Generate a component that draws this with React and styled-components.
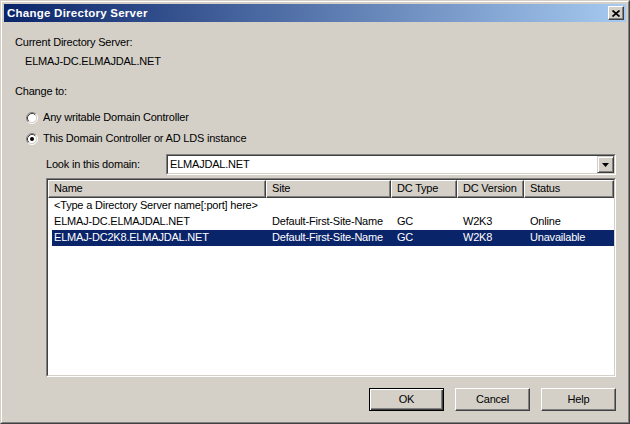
import React from 'react';
import styled, { createGlobalStyle } from 'styled-components';

const Global = createGlobalStyle`
  html, body { margin: 0; padding: 0; background: #d4d0c8; }
  body { width: 630px; height: 424px; overflow: hidden; }
  * { box-sizing: border-box; }
`;

const Window = styled.div`
  width: 630px;
  height: 424px;
  background: #d4d0c8;
  border: 1px solid;
  border-color: #d4d0c8 #404040 #404040 #d4d0c8;
  font-family: "Liberation Sans", Arial, sans-serif;
  font-size: 11px;
  letter-spacing: -0.2px;
  color: #000;
  display: flex;
  flex-direction: column;
`;

const Frame = styled.div`
  flex: 1;
  display: flex;
  flex-direction: column;
  border: 1px solid;
  border-color: #fff #808080 #808080 #fff;
  padding: 2px;
`;

const TitleBar = styled.div`
  height: 18px;
  display: flex;
  align-items: center;
  justify-content: space-between;
  padding: 0 2px 0 3px;
  background: linear-gradient(to right, #0a246a, #a6caf0);
`;

const Title = styled.span`
  color: #fff;
  font-weight: bold;
  font-size: 11.5px;
  letter-spacing: 0.25px;
  line-height: 13px;
`;

const CloseButton = styled.div`
  width: 16px;
  height: 14px;
  background: #d4d0c8;
  border: 1px solid;
  border-color: #fff #404040 #404040 #fff;
  box-shadow: inset -1px -1px #808080;
  display: flex;
  align-items: center;
  justify-content: center;
`;

const Body = styled.div`
  flex: 1;
  display: flex;
  flex-direction: column;
  padding: 14px 10px 0 11px;
`;

const Text = styled.div`
  line-height: 13px;
  height: 13px;
  margin-top: ${p => p.$mt || 0}px;
  padding-left: ${p => p.$indent || 0}px;
  white-space: nowrap;
`;

const RadioRow = styled.div`
  display: flex;
  align-items: center;
  gap: 5px;
  height: 13px;
  margin-left: 11px;
  margin-top: ${p => p.$mt}px;
  line-height: 13px;
`;

const DomainRow = styled.div`
  display: flex;
  align-items: center;
  margin-left: 31px;
  margin-top: 9px;
  height: 21px;
`;

const DomainLabel = styled.div`
  width: 120px;
  line-height: 13px;
`;

const Combo = styled.div`
  flex: 1;
  height: 21px;
  display: flex;
  border: 1px solid;
  border-color: #808080 #fff #fff #808080;
`;

const ComboInner = styled.div`
  flex: 1;
  display: flex;
  align-items: center;
  background: #fff;
  border: 1px solid;
  border-color: #404040 #d4d0c8 #d4d0c8 #404040;
`;

const ComboText = styled.div`
  flex: 1;
  padding-left: 2px;
  line-height: 13px;
`;

const DropButton = styled.div`
  width: 17px;
  height: 17px;
  background: #d4d0c8;
  border: 1px solid;
  border-color: #d4d0c8 #404040 #404040 #d4d0c8;
  box-shadow: inset 1px 1px #fff, inset -1px -1px #808080;
  display: flex;
  align-items: center;
  justify-content: center;
`;

const ListOuter = styled.div`
  margin-left: 31px;
  margin-top: 3px;
  height: 199px;
  display: flex;
  border: 1px solid;
  border-color: #808080 #fff #fff #808080;
`;

const ListInner = styled.div`
  flex: 1;
  background: #fff;
  border: 1px solid;
  border-color: #404040 #d4d0c8 #d4d0c8 #404040;
  display: flex;
  flex-direction: column;
`;

const Header = styled.div`
  display: grid;
  grid-template-columns: 218px 125px 66px 67px 1fr;
  height: 18px;
`;

const HeaderCell = styled.div`
  background: #d4d0c8;
  border: 1px solid;
  border-color: #fff #404040 #404040 #fff;
  box-shadow: inset -1px -1px #808080;
  padding-left: 5px;
  line-height: 15px;
  white-space: nowrap;
  overflow: hidden;
`;

const Row = styled.div`
  display: grid;
  grid-template-columns: 214px 125px 66px 67px 1fr;
  margin-left: 4px;
  height: 16px;
  line-height: 15px;
  background: ${p => (p.$selected ? '#0a246a' : 'transparent')};
  color: ${p => (p.$selected ? '#fff' : '#000')};
`;

const Cell = styled.div`
  padding-left: ${p => (p.$first ? 2 : 6)}px;
  white-space: nowrap;
  overflow: ${p => (p.$span ? 'visible' : 'hidden')};
  grid-column: ${p => (p.$span ? '1 / -1' : 'auto')};
`;

const Buttons = styled.div`
  display: flex;
  justify-content: flex-end;
  gap: 11px;
  margin-top: 11px;
`;

const Button = styled.div`
  width: 75px;
  height: 23px;
  display: flex;
  align-items: center;
  justify-content: center;
  background: #d4d0c8;
  border: 1px solid;
  border-color: ${p => (p.$default ? '#000' : '#fff #404040 #404040 #fff')};
  box-shadow: ${p =>
    p.$default
      ? 'inset 1px 1px #fff, inset -1px -1px #404040, inset -2px -2px #808080'
      : 'inset -1px -1px #808080'};
  line-height: 13px;
`;

const Radio = ({ checked }) => (
  <svg width="12" height="12" viewBox="0 0 12 12">
    <circle cx="6" cy="6" r="4.5" fill="#fff" />
    <path d="M2.11 9.89 A5.5 5.5 0 0 1 9.89 2.11" fill="none" stroke="#808080" />
    <path d="M2.82 9.18 A4.5 4.5 0 0 1 9.18 2.82" fill="none" stroke="#404040" />
    <path d="M9.89 2.11 A5.5 5.5 0 0 1 2.11 9.89" fill="none" stroke="#fff" />
    <path d="M9.18 2.82 A4.5 4.5 0 0 1 2.82 9.18" fill="none" stroke="#d4d0c8" />
    {checked && <circle cx="6" cy="6" r="2" fill="#000" />}
  </svg>
);

const rows = [
  { name: 'ELMAJ-DC.ELMAJDAL.NET', site: 'Default-First-Site-Name', type: 'GC', ver: 'W2K3', status: 'Online' },
  { name: 'ELMAJ-DC2K8.ELMAJDAL.NET', site: 'Default-First-Site-Name', type: 'GC', ver: 'W2K8', status: 'Unavailable', selected: true },
];

export default function App() {
  return (
    <>
      <Global />
      <Window>
        <Frame>
          <TitleBar>
            <Title>Change Directory Server</Title>
            <CloseButton>
              <svg width="8" height="7" viewBox="0 0 8 7">
                <path d="M0.5 0.5 L7.5 6.5 M7.5 0.5 L0.5 6.5" stroke="#000" strokeWidth="1.7" />
              </svg>
            </CloseButton>
          </TitleBar>
          <Body>
            <Text>Current Directory Server:</Text>
            <Text $mt={6} $indent={10}>ELMAJ-DC.ELMAJDAL.NET</Text>
            <Text $mt={17}>Change to:</Text>
            <RadioRow $mt={13}>
              <Radio />
              <span>Any writable Domain Controller</span>
            </RadioRow>
            <RadioRow $mt={8}>
              <Radio checked />
              <span>This Domain Controller or AD LDS instance</span>
            </RadioRow>
            <DomainRow>
              <DomainLabel>Look in this domain:</DomainLabel>
              <Combo>
                <ComboInner>
                  <ComboText>ELMAJDAL.NET</ComboText>
                  <DropButton>
                    <svg width="7" height="4" viewBox="0 0 7 4">
                      <path d="M0 0 H7 L3.5 4 Z" fill="#000" />
                    </svg>
                  </DropButton>
                </ComboInner>
              </Combo>
            </DomainRow>
            <ListOuter>
              <ListInner>
                <Header>
                  <HeaderCell>Name</HeaderCell>
                  <HeaderCell>Site</HeaderCell>
                  <HeaderCell>DC Type</HeaderCell>
                  <HeaderCell>DC Version</HeaderCell>
                  <HeaderCell>Status</HeaderCell>
                </Header>
                <Row>
                  <Cell $first $span>&lt;Type a Directory Server name[:port] here&gt;</Cell>
                </Row>
                {rows.map(r => (
                  <Row key={r.name} $selected={r.selected}>
                    <Cell $first>{r.name}</Cell>
                    <Cell>{r.site}</Cell>
                    <Cell>{r.type}</Cell>
                    <Cell>{r.ver}</Cell>
                    <Cell>{r.status}</Cell>
                  </Row>
                ))}
              </ListInner>
            </ListOuter>
            <Buttons>
              <Button $default>OK</Button>
              <Button>Cancel</Button>
              <Button>Help</Button>
            </Buttons>
          </Body>
        </Frame>
      </Window>
    </>
  );
}
